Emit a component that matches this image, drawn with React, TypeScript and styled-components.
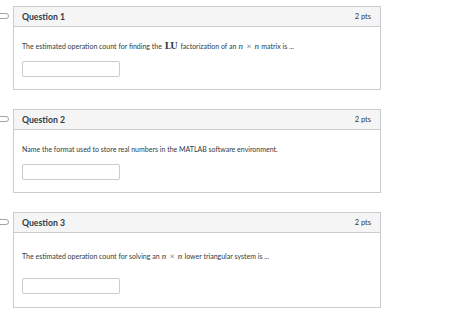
import React from 'react';
import styled, { createGlobalStyle } from 'styled-components';

const GlobalStyle = createGlobalStyle`
  html, body {
    margin: 0;
    padding: 0;
    background: #ffffff;
  }
  body {
    font-family: Lato, 'Liberation Sans', sans-serif;
    color: #2d3b45;
  }
`;

const Page = styled.div`
  display: flex;
  flex-direction: column;
  gap: 19px;
  padding-top: 6px;
  width: 474px;
`;

const QuestionRow = styled.div`
  display: flex;
  align-items: flex-start;
`;

const FlagColumn = styled.div`
  width: 13px;
  flex-shrink: 0;
  overflow: hidden;
  padding-top: 7px;
`;

const Flag = styled.div`
  width: 10px;
  height: 4px;
  margin-left: -3px;
  border: 1px solid #9ba5ab;
  border-radius: 3px;
  background: #ffffff;
`;

const Card = styled.div`
  width: 366px;
  border: 1px solid #c7cdd1;
`;

const Header = styled.div`
  display: flex;
  align-items: center;
  justify-content: space-between;
  height: 19px;
  padding: 0 9px 0 8px;
  background: #f5f5f5;
  border-bottom: 1px solid #c7cdd1;
`;

const Title = styled.div`
  font-size: 8.7px;
  font-weight: 700;
  color: #2d3b45;
`;

const Points = styled.div`
  font-size: 7.5px;
  color: #2d3b45;
`;

const Body = styled.div<{ $spacious?: boolean }>`
  display: flex;
  flex-direction: column;
  align-items: flex-start;
  padding: ${(p) => (p.$spacious ? '19px 8px 13px' : '15px 8px 12px')};
`;

const Text = styled.div<{ $spacious?: boolean }>`
  font-size: 7px;
  line-height: 9px;
  margin-bottom: ${(p) => (p.$spacious ? '17px' : '10px')};
`;

const MathBold = styled.span`
  font-family: 'DejaVu Serif', 'Liberation Serif', serif;
  font-weight: 700;
  font-size: 8.5px;
  margin: 0 1px;
`;

const MathVar = styled.span`
  font-family: 'Liberation Serif', serif;
  font-style: italic;
  font-size: 9px;
  margin: 0 0.5px;
`;

const MathOp = styled.span`
  font-family: 'Liberation Serif', serif;
  font-size: 8.5px;
  color: #4a5660;
  margin: 0 1px;
`;

const Answer = styled.input`
  box-sizing: border-box;
  width: 98px;
  height: 16px;
  margin: 0;
  border: 1px solid #c7cdd1;
  border-radius: 2px;
  background: #ffffff;
`;

interface IQuestion {
  title: string;
  points: string;
  spacious?: boolean;
  text: React.ReactNode;
}

const questions: IQuestion[] = [
  {
    title: 'Question 1',
    points: '2 pts',
    text: (
      <>
        The estimated operation count for finding the <MathBold>LU</MathBold>{' '}
        factorization of an <MathVar>n</MathVar> <MathOp>×</MathOp>{' '}
        <MathVar>n</MathVar> matrix is ...
      </>
    ),
  },
  {
    title: 'Question 2',
    points: '2 pts',
    text: 'Name the format used to store real numbers in the MATLAB software environment.',
  },
  {
    title: 'Question 3',
    points: '2 pts',
    spacious: true,
    text: (
      <>
        The estimated operation count for solving an <MathVar>n</MathVar>{' '}
        <MathOp>×</MathOp> <MathVar>n</MathVar> lower triangular system is ...
      </>
    ),
  },
];

export default function App() {
  return (
    <>
      <GlobalStyle />
      <Page>
        {questions.map((q) => (
          <QuestionRow key={q.title}>
            <FlagColumn>
              <Flag />
            </FlagColumn>
            <Card>
              <Header>
                <Title>{q.title}</Title>
                <Points>{q.points}</Points>
              </Header>
              <Body $spacious={q.spacious}>
                <Text $spacious={q.spacious}>{q.text}</Text>
                <Answer type="text" />
              </Body>
            </Card>
          </QuestionRow>
        ))}
      </Page>
    </>
  );
}
